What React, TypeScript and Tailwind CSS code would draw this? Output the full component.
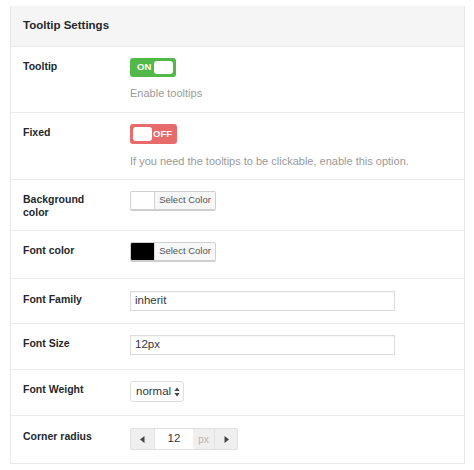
import type { ReactNode } from "react";

type RowProps = {
  label: ReactNode;
  children: ReactNode;
  className?: string;
};

function Row({ label, children, className = "" }: RowProps) {
  return (
    <div className={`flex border-t border-[#ebebeb] pt-[11px] ${className}`}>
      <div className="w-[119px] shrink-0 pl-[12px] pt-[2px] font-bold text-[10.5px] leading-[13px] text-[#23282d]">
        {label}
      </div>
      <div className="flex flex-col">{children}</div>
    </div>
  );
}

function Toggle({ on }: { on: boolean }) {
  if (on) {
    return (
      <div className="flex h-[19px] w-[46px] items-center justify-between rounded-[3px] bg-[#52b848] pl-[7px] pr-[3px]">
        <span className="font-bold text-[9.5px] text-white">ON</span>
        <span className="h-[13px] w-[19px] rounded-[3px] bg-white" />
      </div>
    );
  }
  return (
    <div className="flex h-[20px] w-[47px] items-center justify-between rounded-[3px] bg-[#e86b6b] pl-[3px] pr-[5px]">
      <span className="h-[14px] w-[19px] rounded-[3px] bg-white" />
      <span className="font-bold text-[9.5px] text-white">OFF</span>
    </div>
  );
}

function ColorButton({ color }: { color: string }) {
  return (
    <div className="flex h-[19px] w-[86px] overflow-hidden rounded-[2px] border border-[#cfcfcf] shadow-[0_1px_0_#ccc]">
      <span className="w-[24px] border-r border-[#d5d5d5]" style={{ backgroundColor: color }} />
      <span className="flex flex-1 items-center justify-center bg-[#f7f7f7] text-[9.5px] text-[#555]">
        Select Color
      </span>
    </div>
  );
}

function TextInput({ value }: { value: string }) {
  return (
    <div className="flex h-[20px] w-[265px] items-center border border-[#dcdcdc] bg-white pl-[4px] text-[11.5px] text-[#32373c] shadow-[inset_0_1px_1px_rgba(0,0,0,0.04)]">
      {value}
    </div>
  );
}

export default function App() {
  return (
    <div className="min-h-[470px] bg-white pt-[6px] font-['Liberation_Sans',Arial,sans-serif]">
      <div className="mx-[10px] w-[455px] border-x border-b border-[#e8e8e8]">
        <div className="flex h-[40px] items-center bg-[#f5f5f5] pl-[12px] font-bold text-[11.5px] text-[#23282d]">
          Tooltip Settings
        </div>
        <Row label="Tooltip" className="pb-[12px]">
          <Toggle on />
          <span className="mt-[10px] text-[11px] leading-[13px] text-[#9a9a9a]">
            Enable tooltips
          </span>
        </Row>
        <Row label="Fixed" className="pb-[11px]">
          <Toggle on={false} />
          <span className="mt-[11px] text-[11px] leading-[13px] text-[#9a9a9a]">
            If you need the tooltips to be clickable, enable this option.
          </span>
        </Row>
        <Row label={<>Background<br />color</>} className="pb-[11px]">
          <ColorButton color="#ffffff" />
        </Row>
        <Row label="Font color" className="pb-[17px]">
          <ColorButton color="#000000" />
        </Row>
        <Row label="Font Family" className="pt-[12px] pb-[12px]">
          <TextInput value="inherit" />
        </Row>
        <Row label="Font Size" className="pb-[14px]">
          <TextInput value="12px" />
        </Row>
        <Row label="Font Weight" className="pb-[13px]">
          <div className="flex h-[21px] w-[54px] items-center gap-[3px] rounded-[3px] border border-[#dedede] bg-white pl-[5px] text-[11.5px] text-[#32373c]">
            normal
            <svg width="6" height="10" viewBox="0 0 6 10">
              <path d="M3 0.5 L5.6 4 H0.4 Z M3 9.5 L5.6 6 H0.4 Z" fill="#444" />
            </svg>
          </div>
        </Row>
        <Row label="Corner radius" className="pt-[12px] pb-[13px]">
          <div className="flex h-[22px] w-[108px] rounded-[2px] border border-[#e0e0e0] bg-[#efefef]">
            <span className="flex w-[24px] items-center justify-center border-r border-[#e2e2e2]">
              <svg width="5" height="7" viewBox="0 0 5 7">
                <path d="M4.5 0 V7 L0 3.5 Z" fill="#444" />
              </svg>
            </span>
            <span className="flex w-[38px] items-center justify-center bg-white text-[11.5px] text-[#32373c]">
              12
            </span>
            <span className="flex w-[21px] items-center justify-center text-[10px] text-[#b5b5b5]">
              px
            </span>
            <span className="flex flex-1 items-center justify-center border-l border-[#e2e2e2]">
              <svg width="5" height="7" viewBox="0 0 5 7">
                <path d="M0.5 0 V7 L5 3.5 Z" fill="#444" />
              </svg>
            </span>
          </div>
        </Row>
      </div>
    </div>
  );
}
